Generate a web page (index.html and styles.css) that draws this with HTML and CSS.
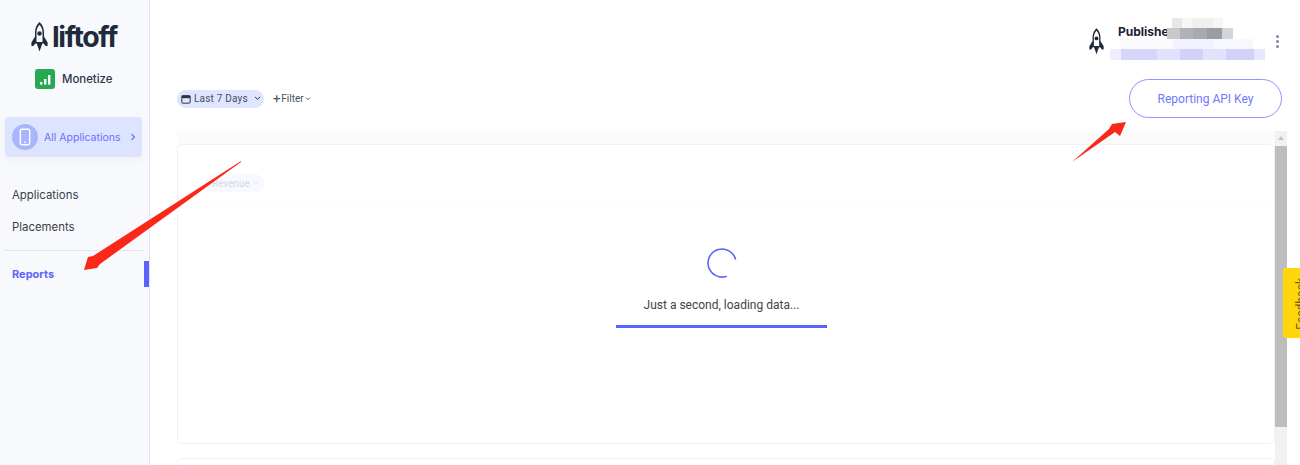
FILE: index.html
```html
<!DOCTYPE html>
<html lang="en">
<head>
    <meta charset="UTF-8">
    <title>Liftoff Monetize - Reports</title>
    <link rel="stylesheet" href="styles.css">
</head>
<body>

<aside class="sidebar">
    <div class="logo">
        <svg class="logo-rocket" viewBox="0 0 17 30" width="17" height="30">
            <path fill-rule="evenodd" fill="#1f2a3c" d="M8.5 0C11.6 2.8 13 6.6 13 10.5V14.5L16.6 20.5V24H14.7L12.6 21.6H11.3L8.5 29.5L5.7 21.6H4.4L2.3 24H.4V20.5L4 14.5V10.5C4 6.6 5.4 2.8 8.5 0ZM8.5 2.8C6.5 5 5.5 7.6 5.5 10.5V20.1H11.5V10.5C11.5 7.6 10.5 5 8.5 2.8Z"/>
            <circle cx="8.5" cy="11.5" r="2.2" fill="#1f2a3c"/>
        </svg>
        <span class="logo-text">liftoff</span>
    </div>
    <div class="product">
        <span class="product-icon">
            <svg viewBox="0 0 20 20" width="20" height="20">
                <rect x="5" y="13" width="2.4" height="2.6" fill="#fff"/>
                <rect x="9" y="10" width="2.4" height="5.6" fill="#fff"/>
                <rect x="13" y="6" width="2.4" height="9.6" fill="#fff"/>
            </svg>
        </span>
        <span>Monetize</span>
    </div>
    <div class="app-switch">
        <span class="app-circle">
            <svg viewBox="0 0 14 20" width="12" height="18">
                <rect x="1.5" y="1" width="11" height="18" rx="2" fill="none" stroke="#fff" stroke-width="1.6"/>
                <circle cx="7" cy="16" r="1" fill="#fff"/>
            </svg>
        </span>
        <span class="app-label">All Applications</span>
        <svg class="app-chevron" viewBox="0 0 8 10" width="6" height="8">
            <path d="M2 1l4 4-4 4" fill="none" stroke="#6a70ff" stroke-width="1.5"/>
        </svg>
    </div>
    <nav class="nav">
        <a class="nav-item">Applications</a>
        <a class="nav-item">Placements</a>
        <div class="nav-divider"></div>
        <a class="nav-item nav-active">Reports</a>
    </nav>
</aside>

<main class="main">
    <header class="topbar">
        <svg class="user-rocket" viewBox="0 0 17 30" width="15" height="27">
            <path fill-rule="evenodd" fill="#1f2a3c" d="M8.5 0C11.6 2.8 13 6.6 13 10.5V14.5L16.6 20.5V24H14.7L12.6 21.6H11.3L8.5 29.5L5.7 21.6H4.4L2.3 24H.4V20.5L4 14.5V10.5C4 6.6 5.4 2.8 8.5 0ZM8.5 2.8C6.5 5 5.5 7.6 5.5 10.5V20.1H11.5V10.5C11.5 7.6 10.5 5 8.5 2.8Z"/>
            <circle cx="8.5" cy="11.5" r="2.2" fill="#1f2a3c"/>
        </svg>
        <div class="user">
            <div class="user-name">Publisher</div>
            <div class="mosaic mosaic-top"></div>
            <div class="mosaic mosaic-name"></div>
            <div class="mosaic mosaic-faint"></div>
            <div class="mosaic mosaic-mail"></div>
        </div>
        <div class="kebab"><i></i><i></i><i></i></div>
    </header>

    <div class="toolbar">
        <div class="date-chip">
            <svg viewBox="0 0 12 12" width="10" height="10">
                <rect x="1" y="2" width="10" height="9" rx="1" fill="none" stroke="#2b3448" stroke-width="1.2"/>
                <rect x="1" y="2" width="10" height="3" fill="#2b3448"/>
            </svg>
            <span>Last 7 Days</span>
            <svg class="date-chev" viewBox="0 0 8 6" width="7" height="5">
                <path d="M1 1l3 3 3-3" fill="none" stroke="#2b3448" stroke-width="1.2"/>
            </svg>
        </div>
        <div class="filter">
            <span class="filter-plus">+</span><span>Filter</span>
            <svg viewBox="0 0 8 6" width="6" height="4">
                <path d="M1 1l3 3 3-3" fill="none" stroke="#2b3448" stroke-width="1.2"/>
            </svg>
        </div>
        <button class="api-btn">Reporting API Key</button>
    </div>

    <section class="panel">
        <div class="panel-scroll">
            <div class="card">
                <div class="card-head">
                    <div class="metric-chip">Revenue
                        <svg viewBox="0 0 8 6" width="6" height="4">
                            <path d="M1 1l3 3 3-3" fill="none" stroke="#d5d8e0" stroke-width="1.2"/>
                        </svg>
                    </div>
                </div>
                <div class="loading">
                    <svg class="spinner" viewBox="0 0 32 32" width="32" height="32">
                        <path d="M29.6 12.6A14 14 0 1 0 20.8 29.2" fill="none" stroke="#5b63ff" stroke-width="1.6"/>
                    </svg>
                    <p class="loading-text">Just a second, loading data...</p>
                    <div class="loading-bar"></div>
                </div>
            </div>
            <div class="card card-next"></div>
        </div>
        <div class="scrollbar">
            <span class="scroll-up"></span>
            <div class="scroll-thumb"></div>
        </div>
    </section>
</main>

<div class="feedback"><span>Feedback</span></div>

<svg class="arrows" viewBox="0 0 1300 465" width="1300" height="465">
    <polygon fill="#fb2718" points="241,161 93,256 88,257 84,270 97,268 100,264 241,162"/>
    <polygon fill="#fb2718" points="1072,162 1109,129 1112,124 1126,122 1120,136 1115,132"/>
</svg>

</body>
</html>
```

FILE: styles.css
```css
* {
    box-sizing: border-box;
}

html, body {
    height: 100%;
}

body {
    margin: 0;
    display: flex;
    position: relative;
    overflow: hidden;
    background: #fff;
    color: #3a3f4b;
    font-family: 'Inter', sans-serif;
}

/* sidebar */
.sidebar {
    width: 150px;
    flex: none;
    background: #f8f9fc;
    border-right: 1px solid #e1e3f3;
    padding: 22px 6px 0 5px;
}

.logo {
    display: flex;
    justify-content: center;
    align-items: flex-start;
    gap: 4px;
    height: 29px;
}

.logo-text {
    font-size: 28.5px;
    font-weight: 700;
    line-height: 29px;
    letter-spacing: -1.4px;
    color: #1f2a3c;
}

.product {
    display: flex;
    align-items: center;
    gap: 7px;
    margin: 18px 0 0 30px;
    font-size: 11.4px;
    font-weight: 500;
    color: #2b3448;
}

.product-icon {
    display: flex;
    width: 20px;
    height: 20px;
    background: #27a853;
    border-radius: 3px;
}

.app-switch {
    display: flex;
    align-items: center;
    height: 40px;
    margin-top: 28px;
    margin-right: 1px;
    padding: 0 6px 0 7px;
    background: #dde4ff;
    border-radius: 4px;
    box-shadow: 0 3px 8px #f0f1f6;
}

.app-circle {
    display: flex;
    align-items: center;
    justify-content: center;
    width: 26px;
    height: 26px;
    border-radius: 50%;
    background: #a8b6fb;
}

.app-label {
    flex: 1;
    margin-left: 6px;
    font-size: 10.5px;
    color: #6a70ff;
}

.nav {
    display: flex;
    flex-direction: column;
    margin-top: 22px;
}

.nav-item {
    display: block;
    height: 32px;
    line-height: 32px;
    padding-left: 7px;
    font-size: 11.4px;
    color: #3a3f4b;
}

.nav-divider {
    height: 1px;
    margin: 7px 0 7px -1px;
    background: #e1e3f3;
}

.nav-active {
    position: relative;
    font-weight: 700;
    font-size: 11px;
    color: #5b63ff;
}

.nav-active::after {
    content: "";
    position: absolute;
    top: 3px;
    right: -6px;
    width: 5px;
    height: 26px;
    background: #5b63ff;
}

/* main area */
.main {
    flex: 1;
    min-width: 0;
    display: flex;
    flex-direction: column;
    padding-left: 27px;
}

.topbar {
    display: flex;
    align-items: flex-start;
    justify-content: flex-end;
    height: 79px;
    padding: 28px 21px 0 0;
}

.user {
    position: relative;
    width: 160px;
    margin-left: 14px;
}

.user-name {
    margin-top: -3px;
    font-size: 12px;
    font-weight: 700;
    line-height: 14px;
    color: #1a2233;
}

.mosaic {
    position: absolute;
    height: 10px;
}

.mosaic-top {
    top: -10px;
    left: 54px;
    width: 51px;
    background: linear-gradient(90deg, #e8e8e8 0 20%, #f7f7f7 20% 40%, #efefef 40% 80%, #f6f6f6 80%);
}

.mosaic-name {
    top: 0;
    left: 49px;
    width: 66px;
    height: 11px;
    background: linear-gradient(90deg, #c9c9cc 0 20%, #b1b2b8 20% 40%, #a9aab0 40% 60%, #9c9da4 60% 83%, #d3d6d8 83%);
}

.mosaic-faint {
    top: 11px;
    left: 2px;
    width: 133px;
    background: linear-gradient(90deg, #fafaff 0 40%, #f1f1ff 40% 70%, #f7f7ff 70%);
}

.mosaic-mail {
    top: 21px;
    left: -8px;
    width: 155px;
    height: 11px;
    background: linear-gradient(90deg, #eeeeff 0 7%, #d6d6fb 7% 30%, #e2e2fc 30% 45%, #d2d2f9 45% 60%, #e2e2fc 60% 75%, #d2d2f9 75% 93%, #e8e8fd 93%);
}

.kebab {
    display: flex;
    flex-direction: column;
    gap: 2px;
    margin: 7px 0 0 -2px;
}

.kebab i {
    width: 3px;
    height: 3px;
    border-radius: 50%;
    background: #7f86a8;
}

.toolbar {
    display: flex;
    align-items: center;
    gap: 9px;
    padding-right: 18px;
}

.date-chip {
    display: flex;
    align-items: center;
    gap: 3px;
    height: 18px;
    padding: 0 3px 0 4px;
    border-radius: 9px;
    background: #dfe5ff;
    font-family: 'Roboto', sans-serif;
    font-size: 10px;
    letter-spacing: .2px;
    color: #4a4f5c;
}

.date-chev {
    margin-left: 3px;
}

.filter {
    display: flex;
    align-items: center;
    gap: 1px;
    font-family: 'Roboto', sans-serif;
    font-size: 10px;
    color: #4a4f5c;
}

.filter-plus {
    font-size: 13px;
    line-height: 13px;
}

.api-btn {
    margin-left: auto;
    width: 153px;
    height: 39px;
    padding: 0;
    border: 1px solid #8f96ff;
    border-radius: 20px;
    background: #fff;
    font-family: 'Roboto', sans-serif;
    font-size: 12px;
    color: #7077ff;
}

.panel {
    flex: 1;
    min-height: 0;
    display: flex;
    margin: 13px 13px 0 0;
    background: linear-gradient(#fafbfa 0 13px, #fff 13px);
}

.panel-scroll {
    flex: 1;
    min-width: 0;
    padding-top: 13px;
    overflow: hidden;
}

.card {
    height: 300px;
    border: 1px solid #f0f1f4;
    border-radius: 5px;
    background: #fff;
}

.card-next {
    height: 100px;
    margin-top: 14px;
}

.card-head {
    display: flex;
    align-items: flex-start;
    height: 62px;
    padding: 29px 0 0 27px;
    border-bottom: 1px solid #fbfbfc;
}

.metric-chip {
    display: flex;
    align-items: center;
    gap: 3px;
    height: 18px;
    padding: 0 5px 0 7px;
    border-radius: 9px;
    background: #f8f9fe;
    font-family: 'Roboto', sans-serif;
    font-size: 10px;
    color: #d5d8e0;
}

.loading {
    display: flex;
    flex-direction: column;
    align-items: center;
    padding: 40px 9px 0 0;
}

.spinner {
    display: block;
}

.loading-text {
    margin: 18px 0 0;
    font-family: 'Roboto', sans-serif;
    font-size: 12px;
    line-height: 16px;
    color: #444;
}

.loading-bar {
    width: 211px;
    height: 3px;
    margin-top: 12px;
    background: #5b63ff;
}

.scrollbar {
    width: 12px;
    flex: none;
    padding-top: 15px;
    background: #f1f1f1;
    position: relative;
}

.scroll-up {
    position: absolute;
    top: 5px;
    left: 3px;
    border-left: 3px solid transparent;
    border-right: 3px solid transparent;
    border-bottom: 4px solid #c4c4c4;
}

.scroll-thumb {
    height: 281px;
    background: #bdbdbd;
}

/* overlays */
.feedback {
    position: absolute;
    top: 268px;
    right: 0;
    width: 17px;
    height: 70px;
    overflow: hidden;
    background: #ffd60a;
    border-radius: 3px 0 0 3px;
}

.feedback span {
    position: absolute;
    top: 10px;
    left: 10px;
    writing-mode: vertical-rl;
    transform: rotate(180deg);
    font-family: 'Roboto', sans-serif;
    font-size: 12px;
    line-height: 16px;
    color: #6b5a20;
}

.arrows {
    position: absolute;
    top: 0;
    left: 0;
    pointer-events: none;
}
```
